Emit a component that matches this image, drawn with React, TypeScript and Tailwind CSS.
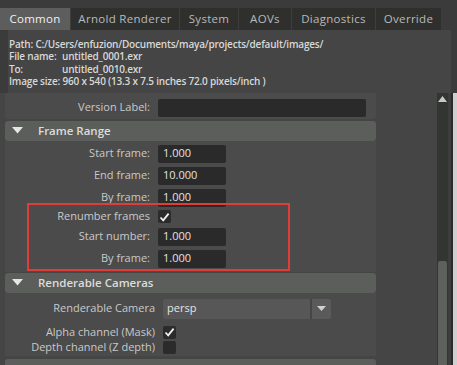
import React from "react";

const font = "font-['Open_Sans','Noto_Sans',sans-serif]";

const tabs = [
  { name: "Common", w: 70 },
  { name: "Arnold Renderer", w: 108 },
  { name: "System", w: 58 },
  { name: "AOVs", w: 52 },
  { name: "Diagnostics", w: 83 },
  { name: "Override", w: 65 },
];

function Triangle() {
  return (
    <svg width="11" height="7" viewBox="0 0 11 7" className="shrink-0">
      <polygon points="0,0 11,0 5.5,6.5" fill="#e6e6e6" />
    </svg>
  );
}

function Header({ title }: { title: string }) {
  return (
    <div className="flex items-center h-[20px] bg-[#5c5e5b] rounded-[3px] pl-[7px]">
      <Triangle />
      <span className="ml-[15px] text-[11.5px] text-[#dcdcdc] font-semibold">{title}</span>
    </div>
  );
}

function Check({ on }: { on: boolean }) {
  return (
    <div className="w-[13px] h-[13px] bg-[#2b2b2b] rounded-[2px] flex items-center justify-center">
      {on && (
        <svg width="11" height="10" viewBox="0 0 11 10">
          <path d="M1.5 5.5 L4.2 8.3 L9.6 1.6" stroke="#f2f2f2" strokeWidth="1.8" fill="none" />
        </svg>
      )}
    </div>
  );
}

function Field({ label, value, labelW = 145, mt }: { label: string; value: string; labelW?: number; mt: string }) {
  return (
    <div className={`flex items-center h-[18px] ${mt}`}>
      <div className="text-right text-[11px] text-[#c9c9c9] pr-[8px] shrink-0" style={{ width: labelW + 8 }}>
        {label}
      </div>
      <div className="w-[68px] h-[18px] bg-[#2a2a2a] rounded-[2px] pl-[5px] flex items-center text-[11px] text-[#e2e2e2]">
        {value}
      </div>
    </div>
  );
}

export default function App() {
  return (
    <div className={`w-[457px] h-[365px] overflow-hidden bg-[#3b3b3b] flex flex-col ${font}`}>
      {/* tab bar */}
      <div className="h-[8px] shrink-0" />
      <div className="flex h-[22px] shrink-0 gap-[1px] w-[441px] bg-[#3e3e3e]">
        {tabs.map((t, i) => (
          <div
            key={t.name}
            style={{ width: t.w }}
            className={`flex items-center justify-center text-[11.5px] tracking-[0.3px] ${
              i === 0 ? "bg-[#5d5d5d] text-[#f0f0f0]" : "bg-[#2f302e] text-[#b9b9b9]"
            }`}
          >
            {t.name}
          </div>
        ))}
      </div>

      {/* file info */}
      <div className="ml-[8px] mr-[6px] bg-[#444544] pt-[8px] pb-[5px] pl-[1px] text-[10px] text-[#d8d8d8] font-semibold tracking-[-0.2px] shrink-0 flex flex-col">
        <div className="h-[12.4px] leading-[12.4px]">Path: C:/Users/enfuzion/Documents/maya/projects/default/images/</div>
        <div className="flex h-[12.4px] leading-[12.4px]">
          <span className="w-[53px]">File name:</span>
          <span>untitled_0001.exr</span>
        </div>
        <div className="flex h-[12.4px] leading-[12.4px]">
          <span className="w-[53px]">To:</span>
          <span>untitled_0010.exr</span>
        </div>
        <div className="h-[12.4px] leading-[12.4px]">Image size: 960 x 540 (13.3 x 7.5 inches 72.0 pixels/inch )</div>
      </div>

      {/* scroll area */}
      <div className="flex flex-1 min-h-0 bg-[#444544]">
        <div className="w-[437px] pl-[5px] overflow-hidden">
          <div className="w-[371px] flex flex-col">
            {/* previous section tail */}
            <div className="bg-[#4b4b4b] rounded-b-[3px] pt-[6px] pb-[4px] h-[26px]">
              <div className="flex items-center h-[18px]">
                <div className="w-[153px] text-right pr-[8px] text-[11px] text-[#c9c9c9]">Version Label:</div>
                <div className="w-[208px] h-[18px] bg-[#2a2a2a] rounded-[2px]" />
              </div>
            </div>

            <div className="mt-[2px]">
              <Header title="Frame Range" />
            </div>
            <div className="relative bg-[#4b4b4b] h-[131px] pt-[4px]">
              <Field label="Start frame:" value="1.000" mt="" />
              <Field label="End frame:" value="10.000" mt="mt-[4px]" />
              <Field label="By frame:" value="1.000" mt="mt-[4px]" />
              <div className="flex items-center h-[14px] mt-[3px]">
                <div className="w-[153px] text-right pr-[8px] text-[11px] text-[#c9c9c9]">Renumber frames</div>
                <Check on />
              </div>
              <Field label="Start number:" value="1.000" mt="mt-[4px]" />
              <Field label="By frame:" value="1.000" mt="mt-[4px]" />
              <div className="absolute left-[22px] top-[62px] w-[263px] h-[68px] border-2 border-[#e23c3a]" />
            </div>

            <div className="mt-[1px]">
              <Header title="Renderable Cameras" />
            </div>
            <div className="bg-[#4b4b4b] h-[63px] pt-[6px]">
              <div className="flex items-center h-[20px]">
                <div className="w-[158px] text-right pr-[8px] text-[11px] text-[#c9c9c9]">Renderable Camera</div>
                <div className="w-[147px] h-[20px] bg-[#575757] rounded-l-[2px] pl-[4px] flex items-center text-[11px] text-[#e4e4e4]">
                  persp
                </div>
                <div className="w-[2px] h-[20px] bg-[#464646]" />
                <div className="w-[19px] h-[20px] bg-[#5a5a5a] rounded-r-[2px] flex items-center justify-center">
                  <svg width="9" height="5" viewBox="0 0 9 5">
                    <polygon points="0,0 9,0 4.5,5" fill="#d0d0d0" />
                  </svg>
                </div>
              </div>
              <div className="flex items-center h-[13px] mt-[7px]">
                <div className="w-[158px] text-right pr-[8px] text-[11px] text-[#c9c9c9]">Alpha channel (Mask)</div>
                <Check on />
              </div>
              <div className="flex items-center h-[13px] mt-[2px]">
                <div className="w-[158px] text-right pr-[8px] text-[11px] text-[#c9c9c9]">Depth channel (Z depth)</div>
                <Check on={false} />
              </div>
            </div>

            <div className="mt-[3px] h-[20px] bg-[#5c5e5b] rounded-[3px]" />
          </div>
        </div>

        {/* scrollbar */}
        <div className="w-[11px] bg-[#333533] flex flex-col items-center">
          <svg width="9" height="6" viewBox="0 0 9 6" className="mt-[3px]">
            <polygon points="4.5,0 9,6 0,6" fill="#c8c8c8" />
          </svg>
          <div className="flex-1" />
          <div className="w-[9px] h-[104px] bg-[#5e605d] rounded-t-[2px]" />
        </div>
        <div className="w-[3px] bg-[#3c3d3c]" />
        <div className="w-[2px] bg-[#2b2b2b]" />
        <div className="w-[4px] bg-[#cfcfcf]" />
      </div>
    </div>
  );
}
